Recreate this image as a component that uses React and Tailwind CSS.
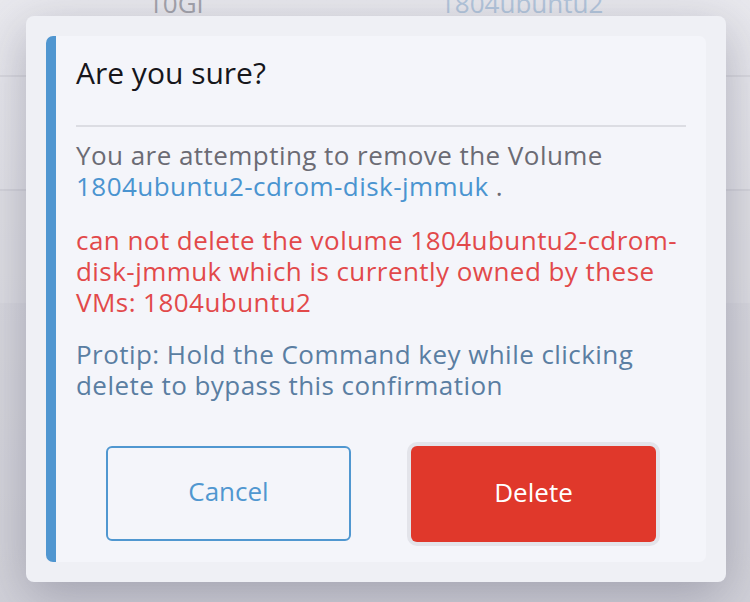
import React from 'react';

const FONT = { fontFamily: '"Open Sans", "Noto Sans", sans-serif' };

function BackgroundTable() {
  return (
    <div className="flex flex-col h-full bg-gradient-to-b from-[#e9e9ee] to-[#d3d3da]">
      <div className="h-[77px] border-b-2 border-[#d9d9df] relative">
        <span className="absolute left-[148px] -top-[16px] text-[26px] text-[#a3a3ab]">10Gi</span>
        <span className="absolute left-[440px] -top-[16px] text-[26px] text-[#b3c6dc]">1804ubuntu2</span>
      </div>
      <div className="h-[114px] border-b-2 border-[#d4d4db]" />
      <div className="h-[112px] bg-[#dcdce2]/40" />
      <div className="flex-1 bg-[#cfd0d8]/40" />
    </div>
  );
}

export default function App() {
  return (
    <div className="relative w-[750px] h-[602px] overflow-hidden" style={FONT}>
      <BackgroundTable />

      {/* modal */}
      <div className="absolute left-[26px] top-[16px] w-[700px] h-[566px] rounded-[8px] bg-[#eff0f5] p-[20px] shadow-[0_14px_50px_rgba(70,70,95,0.35)]">
        <div className="h-full flex rounded-[7px] overflow-hidden bg-[#f4f5fa]">
          <div className="w-[10px] bg-[#5096d0] shrink-0" />
          <div className="flex-1 flex flex-col pl-[20px] pr-[20px]">
            <h2 className="pt-[17px] text-[30px] leading-[40px] text-[#16161b]">Are you sure?</h2>
            <div className="mt-[32px] h-[2px] bg-[#dcdde3]" />

            <div className="mt-[13px] text-[26px] leading-[31px] tracking-[0.45px]">
              <p className="text-[#6b6b74]">
                You are attempting to remove the Volume
                <br />
                <span className="text-[#4a94d0]">1804ubuntu2-cdrom-disk-jmmuk</span> .
              </p>
              <p className="mt-[23px] text-[#e2494a]">
                can not delete the volume 1804ubuntu2-cdrom-
                <br />
                disk-jmmuk which is currently owned by these
                <br />
                VMs: 1804ubuntu2
              </p>
              <p className="mt-[21px] text-[#5a7ea2]">
                Protip: Hold the Command key while clicking
                <br />
                delete to bypass this confirmation
              </p>
            </div>

            <div className="mt-auto mb-[20px] grid grid-cols-2">
              <div className="flex justify-center">
                <button className="w-[245px] h-[95px] pb-[4px] rounded-[6px] border-2 border-[#5097d0] text-[26px] text-[#5097d0]">
                  Cancel
                </button>
              </div>
              <div className="flex justify-center">
                <button className="w-[245px] h-[96px] pb-[4px] rounded-[6px] bg-[#e0382b] text-[26px] font-medium text-white ring-4 ring-[#e3e4ea]">
                  Delete
                </button>
              </div>
            </div>
          </div>
        </div>
      </div>
    </div>
  );
}
